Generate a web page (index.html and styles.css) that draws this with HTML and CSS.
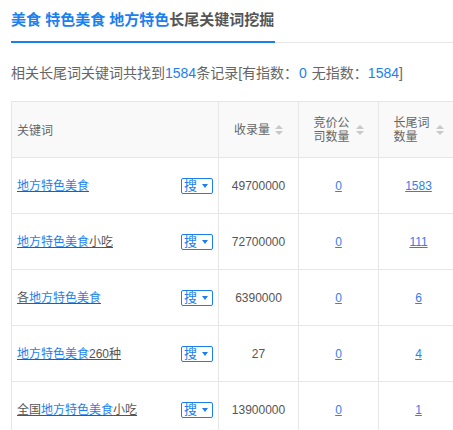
FILE: index.html
```html
<!DOCTYPE html>
<html lang="zh-CN">
<head>
<meta charset="utf-8">
<title>地方特色长尾关键词挖掘</title>
<link rel="stylesheet" href="styles.css">
</head>
<body>
<div class="page">
  <div class="tabs">
    <div class="tab"><span class="hl">美食 特色美食 地方特色</span>长尾关键词挖掘</div>
  </div>
  <p class="summary">相关长尾词关键词共找到<span class="hl">1584</span>条记录[有指数：<span class="hl num-gap">0</span>无指数：<span class="hl">1584</span>]</p>
  <table class="kw-table">
    <colgroup>
      <col class="c-kw"><col class="c-n"><col class="c-n"><col class="c-n">
    </colgroup>
    <thead>
      <tr>
        <th class="th-kw">关键词</th>
        <th><div class="th-in"><span class="lbl">收录量</span><span class="sort"><i class="up"></i><i class="down"></i></span></div></th>
        <th><div class="th-in"><span class="lbl">竞价公司数量</span><span class="sort"><i class="up"></i><i class="down"></i></span></div></th>
        <th><div class="th-in"><span class="lbl">长尾词数量</span><span class="sort"><i class="up"></i><i class="down"></i></span></div></th>
      </tr>
    </thead>
    <tbody>
      <tr>
        <td><div class="kw"><a href="#" class="kw-link"><span class="hl">地方特色美食</span></a><span class="sou">搜<i class="caret"></i></span></div></td>
        <td class="val">49700000</td>
        <td class="val"><a href="#" class="num">0</a></td>
        <td class="val"><a href="#" class="num">1583</a></td>
      </tr>
      <tr>
        <td><div class="kw"><a href="#" class="kw-link"><span class="hl">地方特色美食</span>小吃</a><span class="sou">搜<i class="caret"></i></span></div></td>
        <td class="val">72700000</td>
        <td class="val"><a href="#" class="num">0</a></td>
        <td class="val"><a href="#" class="num">111</a></td>
      </tr>
      <tr>
        <td><div class="kw"><a href="#" class="kw-link">各<span class="hl">地方特色美食</span></a><span class="sou">搜<i class="caret"></i></span></div></td>
        <td class="val">6390000</td>
        <td class="val"><a href="#" class="num">0</a></td>
        <td class="val"><a href="#" class="num">6</a></td>
      </tr>
      <tr>
        <td><div class="kw"><a href="#" class="kw-link"><span class="hl">地方特色美食</span>260种</a><span class="sou">搜<i class="caret"></i></span></div></td>
        <td class="val">27</td>
        <td class="val"><a href="#" class="num">0</a></td>
        <td class="val"><a href="#" class="num">4</a></td>
      </tr>
      <tr>
        <td><div class="kw"><a href="#" class="kw-link">全国<span class="hl">地方特色美食</span>小吃</a><span class="sou">搜<i class="caret"></i></span></div></td>
        <td class="val">13900000</td>
        <td class="val"><a href="#" class="num">0</a></td>
        <td class="val"><a href="#" class="num">1</a></td>
      </tr>
    </tbody>
  </table>
</div>
</body>
</html>
```

FILE: styles.css
```css
html, body {
  margin: 0;
  padding: 0;
  overflow: hidden;
  background: #fff;
}
body {
  font-family: "Liberation Sans", "Noto Sans CJK SC", sans-serif;
  color: #666;
}
.page {
  padding-left: 11px;
  width: 600px;
}
.hl { color: #1a7ff0; }

.tabs {
  border-bottom: 1px solid #e6e6e6;
  display: flex;
}
.tab {
  font-size: 15px;
  font-weight: bold;
  line-height: 24px;
  padding: 8px 1px 9px 0;
  color: #555;
  border-bottom: 2px solid #1a7ff0;
  margin-bottom: -1px;
}

.summary {
  margin: 20px 0 0 0;
  font-size: 14px;
  line-height: 20px;
  color: #666;
}
.num-gap { margin-right: 5px; margin-left: 1px; }

.kw-table {
  margin-top: 18px;
  border-collapse: collapse;
  table-layout: fixed;
  width: 447px;
  font-size: 12px;
}
.c-kw { width: 207px; }
.c-n { width: 80px; }
.kw-table th, .kw-table td {
  border: 1px solid #e6e6e6;
  height: 55px;
  padding: 0;
}
.kw-table th {
  background: #f9f9f9;
  font-weight: normal;
  color: #666;
}
.kw-table th.th-kw {
  text-align: left;
  padding-left: 5px;
}
.th-in {
  display: flex;
  align-items: center;
  justify-content: center;
  gap: 5px;
}
.lbl {
  max-width: 37px;
  line-height: 14px;
  text-align: left;
}
.sort {
  display: flex;
  flex-direction: column;
  gap: 2px;
}
.sort i {
  display: block;
  width: 0;
  height: 0;
  border-left: 4px solid transparent;
  border-right: 4px solid transparent;
}
.sort .up { border-bottom: 4px solid #c8c8c8; }
.sort .down { border-top: 4px solid #c8c8c8; }

.kw {
  display: flex;
  align-items: center;
  justify-content: space-between;
  padding: 0 5px 0 5px;
}
.kw-link {
  color: #555;
  text-decoration: underline;
  line-height: 16px;
}
.sou {
  display: inline-flex;
  align-items: center;
  gap: 5px;
  border: 1px solid #1a7ff0;
  border-radius: 2px;
  color: #1a7ff0;
  font-size: 13px;
  line-height: 14px;
  padding: 0 4px 0 2px;
  height: 14px;
}
.caret {
  display: block;
  width: 0;
  height: 0;
  border-left: 3.5px solid transparent;
  border-right: 3.5px solid transparent;
  border-top: 4px solid #1a7ff0;
}
.val {
  text-align: center;
  color: #555;
}
.num {
  color: #2f80ed;
  text-decoration: underline;
}
```
